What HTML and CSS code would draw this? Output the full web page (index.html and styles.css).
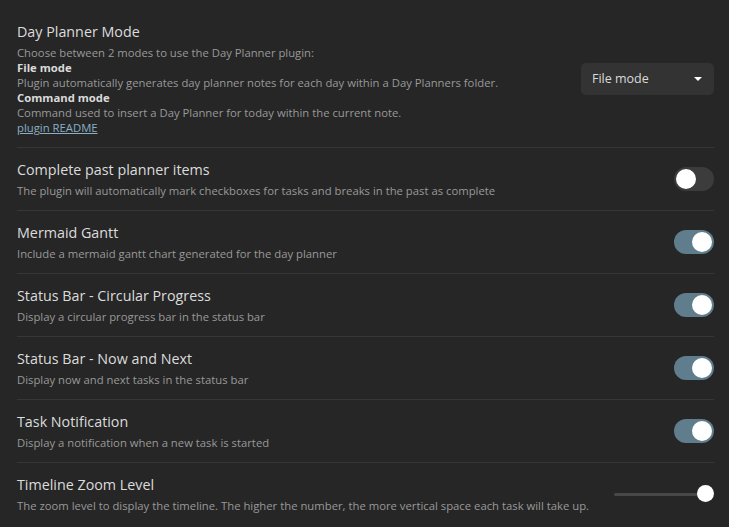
FILE: index.html
```html
<!DOCTYPE html>
<html>
<head>
<meta charset="utf-8">
<link rel="stylesheet" href="styles.css">
</head>
<body>
<div class="settings">
  <div class="item">
    <div class="info">
      <div class="name">Day Planner Mode</div>
      <div class="desc">
        Choose between 2 modes to use the Day Planner plugin:<br>
        <strong>File mode</strong><br>
        Plugin automatically generates day planner notes for each day within a Day Planners folder.<br>
        <strong>Command mode</strong><br>
        Command used to insert a Day Planner for today within the current note.<br>
        <a class="link" href="#">plugin README</a>
      </div>
    </div>
    <div class="control">
      <div class="dropdown"><span>File mode</span><span class="caret"></span></div>
    </div>
  </div>
  <div class="item">
    <div class="info">
      <div class="name">Complete past planner items</div>
      <div class="desc">The plugin will automatically mark checkboxes for tasks and breaks in the past as complete</div>
    </div>
    <div class="control"><div class="toggle"><div class="knob"></div></div></div>
  </div>
  <div class="item">
    <div class="info">
      <div class="name">Mermaid Gantt</div>
      <div class="desc">Include a mermaid gantt chart generated for the day planner</div>
    </div>
    <div class="control"><div class="toggle on"><div class="knob"></div></div></div>
  </div>
  <div class="item">
    <div class="info">
      <div class="name">Status Bar - Circular Progress</div>
      <div class="desc">Display a circular progress bar in the status bar</div>
    </div>
    <div class="control"><div class="toggle on"><div class="knob"></div></div></div>
  </div>
  <div class="item">
    <div class="info">
      <div class="name">Status Bar - Now and Next</div>
      <div class="desc">Display now and next tasks in the status bar</div>
    </div>
    <div class="control"><div class="toggle on"><div class="knob"></div></div></div>
  </div>
  <div class="item">
    <div class="info">
      <div class="name">Task Notification</div>
      <div class="desc">Display a notification when a new task is started</div>
    </div>
    <div class="control"><div class="toggle on"><div class="knob"></div></div></div>
  </div>
  <div class="item">
    <div class="info">
      <div class="name">Timeline Zoom Level</div>
      <div class="desc">The zoom level to display the timeline. The higher the number, the more vertical space each task will take up.</div>
    </div>
    <div class="control"><div class="slider"><div class="track"></div><div class="thumb"></div></div></div>
  </div>
</div>
</body>
</html>
```

FILE: styles.css
```css
html, body {
  margin: 0;
  padding: 0;
  background: #262626;
  height: 100%;
}
body {
  font-family: "Open Sans", "Noto Sans", sans-serif;
  color: #dadada;
  overflow: hidden;
}
.settings {
  padding: 10px 15px 0 17px;
}
.item {
  display: flex;
  align-items: center;
  padding: 12px 0;
  border-top: 1px solid #363636;
}
.item:first-child {
  border-top: none;
}
.info {
  flex: 1 1 auto;
  min-width: 0;
}
.name {
  font-size: 14.3px;
  line-height: 20px;
  color: #dcdcdc;
}
.desc {
  margin-top: 3px;
  font-size: 11.3px;
  line-height: 15px;
  color: #999999;
  white-space: nowrap;
}
.desc strong {
  color: #dadada;
  font-weight: 700;
}
.link {
  color: #8aaec4;
  text-decoration: underline;
}
.control {
  flex: 0 0 auto;
  display: flex;
  justify-content: flex-end;
}
.dropdown {
  width: 133px;
  height: 32px;
  box-sizing: border-box;
  background: #333333;
  border-radius: 5px;
  display: flex;
  align-items: center;
  justify-content: space-between;
  padding: 0 12px 0 11px;
  font-size: 12.5px;
  color: #dadada;
}
.caret {
  width: 0;
  height: 0;
  border-left: 4px solid transparent;
  border-right: 4px solid transparent;
  border-top: 4px solid #ffffff;
}
.toggle {
  width: 40px;
  height: 24px;
  border-radius: 12px;
  background: #3c3c3c;
  position: relative;
}
.toggle.on {
  background: #5f7d8c;
}
.knob {
  position: absolute;
  top: 2px;
  left: 2px;
  width: 20px;
  height: 20px;
  border-radius: 50%;
  background: #ffffff;
}
.toggle.on .knob {
  left: 18px;
}
.slider {
  width: 100px;
  height: 18px;
  position: relative;
  display: flex;
  align-items: center;
}
.track {
  width: 88px;
  height: 3px;
  background: #474747;
  border-radius: 2px;
}
.thumb {
  position: absolute;
  right: 0;
  top: 0;
  width: 17px;
  height: 17px;
  border-radius: 50%;
  background: #ffffff;
}
```
